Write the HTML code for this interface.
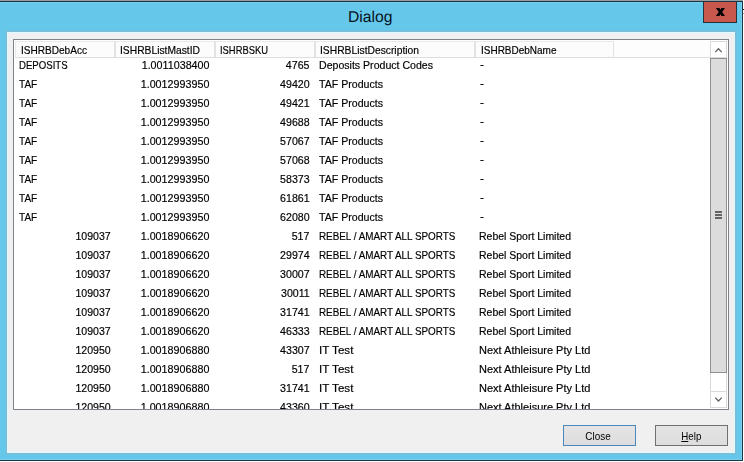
<!DOCTYPE html>
<html><head><meta charset="utf-8"><title>Dialog</title>
<style>
html,body{margin:0;padding:0;}
body{width:744px;height:462px;background:#fff;overflow:hidden;position:relative;font-family:"Liberation Sans",sans-serif;font-size:11px;color:#000;}
.abs{position:absolute;}
#win{position:absolute;left:0;top:0;width:743px;height:461px;background:#65c8eb;}
#topg{position:absolute;left:0;top:0;width:743px;height:1px;background:#9a9ba0;}
#topd{position:absolute;left:0;top:1px;width:743px;height:1px;background:#1d3644;}
#topl{position:absolute;left:0;top:2px;width:741px;height:456px;border-top:1px solid #76cdec;border-right:1px solid #7ccfec;border-bottom:1px solid #7ccfec;}
#rd{position:absolute;left:742px;top:1px;width:1px;height:460px;background:#1d3644;}
#bd{position:absolute;left:0;top:460px;width:743px;height:1px;background:#1d3644;}

#title{position:absolute;left:348px;top:8.6px;font-size:15.7px;line-height:17px;color:#06121c;white-space:nowrap;text-rendering:geometricPrecision;}
#cls{position:absolute;left:703px;top:2px;width:32px;height:20px;background:#c8574d;border:1px solid #26323b;border-top:none;}
#client{position:absolute;left:7px;top:32px;width:728px;height:421px;background:#f0f0f0;box-shadow:inset 0 0 0 1px #e0f9ff, inset 0 0 0 2px #ecf1f3, 0 0 0 1px #7fbbd5, 0 0 0 2px #6bc4e3;}
#lv{will-change:transform;position:absolute;left:13px;top:39px;width:714px;height:369px;border:1px solid #80838a;background:#fff;overflow:hidden;}
#hdr{position:absolute;left:0;top:1px;width:696px;height:17px;background:#fff;}
.hc{position:absolute;top:0;height:15px;background:#fcfcfc;border-top:1px solid #e9e9e9;border-right:2px solid #e2e2e2;border-bottom:1px solid #dedede;box-sizing:content-box;}
.t{position:absolute;white-space:nowrap;line-height:13px;display:inline-block;-webkit-text-stroke:0.18px #000;}
#sb{position:absolute;left:696px;top:1px;width:17px;height:367px;background:#fff;box-shadow:inset 1px 0 0 #dadada, inset -1px 0 0 #dadada;}
.sbtn{position:absolute;left:0;width:15px;height:15px;border:1px solid #dadada;background:#fff;}
#thumb{position:absolute;left:0;top:17px;width:15px;height:313px;background:#dcdcdc;border:1px solid #8f8f8f;}
.grip{position:absolute;left:4px;width:7px;height:2px;background:#646464;}
.btn{will-change:transform;position:absolute;top:425px;width:71px;height:19px;border:1px solid #707070;background:linear-gradient(#e4e4e4,#dddddd);text-align:center;line-height:19px;}
</style></head><body>
<div id="win"></div><div id="topg"></div><div id="topd"></div><div id="topl"></div><div id="rd"></div><div id="bd"></div>
<div class="abs" style="left:743px;top:9px;width:1px;height:1px;background:#222"></div><div class="abs" style="left:743px;top:13px;width:1px;height:1px;background:#aaa"></div>
<div id="title">Dialog</div>
<div id="cls"><svg width="32" height="20" viewBox="0 0 32 20" style="position:absolute;left:0;top:0"><path d="M11.9 5.9 H15.3 L21 13.9 H17.6 Z M17.6 5.9 H21 L15.3 13.9 H11.9 Z" fill="#000"/></svg></div>
<div id="client"></div>
<div id="lv">
 <div id="hdr">
<div class="hc" style="left:1px;width:99px;box-shadow:inset 1px 0 0 #ebebeb"></div>
<span class="t" style="left:6.5px;top:3px;transform:scaleX(0.9149);transform-origin:0 0">ISHRBDebAcc</span>
<div class="hc" style="left:102px;width:98px"></div>
<span class="t" style="left:106.0px;top:3px;transform:scaleX(0.9348);transform-origin:0 0">ISHRBListMastID</span>
<div class="hc" style="left:202px;width:98px"></div>
<span class="t" style="left:206.0px;top:3px;transform:scaleX(0.8533);transform-origin:0 0">ISHRBSKU</span>
<div class="hc" style="left:302px;width:158px"></div>
<span class="t" style="left:306.0px;top:3px;transform:scaleX(0.9360);transform-origin:0 0">ISHRBListDescription</span>
<div class="hc" style="left:462px;width:137px;border-right-width:1px"></div>
<span class="t" style="left:466.7px;top:3px;transform:scaleX(0.9081);transform-origin:0 0">ISHRBDebName</span>
<div class="hc" style="left:600px;width:96px;border-right:none;border-top-color:#fdfdfd;background:#fdfdfd"></div>
 </div>
<span class="t" style="left:5.199999999999999px;top:19px;transform:scaleX(0.8738);transform-origin:0 0">DEPOSITS</span>
<span class="t" style="right:518.7px;top:19px;transform:scaleX(0.9760);transform-origin:100% 0">1.0011038400</span>
<span class="t" style="right:418.2px;top:19px;transform:scaleX(0.9650);transform-origin:100% 0">4765</span>
<span class="t" style="left:305.2px;top:19px;transform:scaleX(0.9611);transform-origin:0 0">Deposits Product Codes</span>
<span class="t" style="left:466.2px;top:18px;transform:scaleX(1.0800);transform-origin:0 0">-</span>
<span class="t" style="left:5.199999999999999px;top:38px;transform:scaleX(0.9120);transform-origin:0 0">TAF</span>
<span class="t" style="right:518.7px;top:38px;transform:scaleX(0.9760);transform-origin:100% 0">1.0012993950</span>
<span class="t" style="right:418.2px;top:38px;transform:scaleX(0.9650);transform-origin:100% 0">49420</span>
<span class="t" style="left:305.2px;top:38px;transform:scaleX(0.9633);transform-origin:0 0">TAF Products</span>
<span class="t" style="left:466.2px;top:37px;transform:scaleX(1.0800);transform-origin:0 0">-</span>
<span class="t" style="left:5.199999999999999px;top:57px;transform:scaleX(0.9120);transform-origin:0 0">TAF</span>
<span class="t" style="right:518.7px;top:57px;transform:scaleX(0.9760);transform-origin:100% 0">1.0012993950</span>
<span class="t" style="right:418.2px;top:57px;transform:scaleX(0.9650);transform-origin:100% 0">49421</span>
<span class="t" style="left:305.2px;top:57px;transform:scaleX(0.9633);transform-origin:0 0">TAF Products</span>
<span class="t" style="left:466.2px;top:56px;transform:scaleX(1.0800);transform-origin:0 0">-</span>
<span class="t" style="left:5.199999999999999px;top:76px;transform:scaleX(0.9120);transform-origin:0 0">TAF</span>
<span class="t" style="right:518.7px;top:76px;transform:scaleX(0.9760);transform-origin:100% 0">1.0012993950</span>
<span class="t" style="right:418.2px;top:76px;transform:scaleX(0.9650);transform-origin:100% 0">49688</span>
<span class="t" style="left:305.2px;top:76px;transform:scaleX(0.9633);transform-origin:0 0">TAF Products</span>
<span class="t" style="left:466.2px;top:75px;transform:scaleX(1.0800);transform-origin:0 0">-</span>
<span class="t" style="left:5.199999999999999px;top:95px;transform:scaleX(0.9120);transform-origin:0 0">TAF</span>
<span class="t" style="right:518.7px;top:95px;transform:scaleX(0.9760);transform-origin:100% 0">1.0012993950</span>
<span class="t" style="right:418.2px;top:95px;transform:scaleX(0.9650);transform-origin:100% 0">57067</span>
<span class="t" style="left:305.2px;top:95px;transform:scaleX(0.9633);transform-origin:0 0">TAF Products</span>
<span class="t" style="left:466.2px;top:94px;transform:scaleX(1.0800);transform-origin:0 0">-</span>
<span class="t" style="left:5.199999999999999px;top:114px;transform:scaleX(0.9120);transform-origin:0 0">TAF</span>
<span class="t" style="right:518.7px;top:114px;transform:scaleX(0.9760);transform-origin:100% 0">1.0012993950</span>
<span class="t" style="right:418.2px;top:114px;transform:scaleX(0.9650);transform-origin:100% 0">57068</span>
<span class="t" style="left:305.2px;top:114px;transform:scaleX(0.9633);transform-origin:0 0">TAF Products</span>
<span class="t" style="left:466.2px;top:113px;transform:scaleX(1.0800);transform-origin:0 0">-</span>
<span class="t" style="left:5.199999999999999px;top:133px;transform:scaleX(0.9120);transform-origin:0 0">TAF</span>
<span class="t" style="right:518.7px;top:133px;transform:scaleX(0.9760);transform-origin:100% 0">1.0012993950</span>
<span class="t" style="right:418.2px;top:133px;transform:scaleX(0.9650);transform-origin:100% 0">58373</span>
<span class="t" style="left:305.2px;top:133px;transform:scaleX(0.9633);transform-origin:0 0">TAF Products</span>
<span class="t" style="left:466.2px;top:132px;transform:scaleX(1.0800);transform-origin:0 0">-</span>
<span class="t" style="left:5.199999999999999px;top:152px;transform:scaleX(0.9120);transform-origin:0 0">TAF</span>
<span class="t" style="right:518.7px;top:152px;transform:scaleX(0.9760);transform-origin:100% 0">1.0012993950</span>
<span class="t" style="right:418.2px;top:152px;transform:scaleX(0.9650);transform-origin:100% 0">61861</span>
<span class="t" style="left:305.2px;top:152px;transform:scaleX(0.9633);transform-origin:0 0">TAF Products</span>
<span class="t" style="left:466.2px;top:151px;transform:scaleX(1.0800);transform-origin:0 0">-</span>
<span class="t" style="left:5.199999999999999px;top:171px;transform:scaleX(0.9120);transform-origin:0 0">TAF</span>
<span class="t" style="right:518.7px;top:171px;transform:scaleX(0.9760);transform-origin:100% 0">1.0012993950</span>
<span class="t" style="right:418.2px;top:171px;transform:scaleX(0.9650);transform-origin:100% 0">62080</span>
<span class="t" style="left:305.2px;top:171px;transform:scaleX(0.9633);transform-origin:0 0">TAF Products</span>
<span class="t" style="left:466.2px;top:170px;transform:scaleX(1.0800);transform-origin:0 0">-</span>
<span class="t" style="right:617.7px;top:190px;transform:scaleX(0.9600);transform-origin:100% 0">109037</span>
<span class="t" style="right:518.7px;top:190px;transform:scaleX(0.9760);transform-origin:100% 0">1.0018906620</span>
<span class="t" style="right:418.2px;top:190px;transform:scaleX(0.9650);transform-origin:100% 0">517</span>
<span class="t" style="left:305.2px;top:190px;transform:scaleX(0.8965);transform-origin:0 0">REBEL / AMART ALL SPORTS</span>
<span class="t" style="left:465.0px;top:190px;transform:scaleX(0.9523);transform-origin:0 0">Rebel Sport Limited</span>
<span class="t" style="right:617.7px;top:209px;transform:scaleX(0.9600);transform-origin:100% 0">109037</span>
<span class="t" style="right:518.7px;top:209px;transform:scaleX(0.9760);transform-origin:100% 0">1.0018906620</span>
<span class="t" style="right:418.2px;top:209px;transform:scaleX(0.9650);transform-origin:100% 0">29974</span>
<span class="t" style="left:305.2px;top:209px;transform:scaleX(0.8965);transform-origin:0 0">REBEL / AMART ALL SPORTS</span>
<span class="t" style="left:465.0px;top:209px;transform:scaleX(0.9523);transform-origin:0 0">Rebel Sport Limited</span>
<span class="t" style="right:617.7px;top:228px;transform:scaleX(0.9600);transform-origin:100% 0">109037</span>
<span class="t" style="right:518.7px;top:228px;transform:scaleX(0.9760);transform-origin:100% 0">1.0018906620</span>
<span class="t" style="right:418.2px;top:228px;transform:scaleX(0.9650);transform-origin:100% 0">30007</span>
<span class="t" style="left:305.2px;top:228px;transform:scaleX(0.8965);transform-origin:0 0">REBEL / AMART ALL SPORTS</span>
<span class="t" style="left:465.0px;top:228px;transform:scaleX(0.9523);transform-origin:0 0">Rebel Sport Limited</span>
<span class="t" style="right:617.7px;top:247px;transform:scaleX(0.9600);transform-origin:100% 0">109037</span>
<span class="t" style="right:518.7px;top:247px;transform:scaleX(0.9760);transform-origin:100% 0">1.0018906620</span>
<span class="t" style="right:418.2px;top:247px;transform:scaleX(0.9650);transform-origin:100% 0">30011</span>
<span class="t" style="left:305.2px;top:247px;transform:scaleX(0.8965);transform-origin:0 0">REBEL / AMART ALL SPORTS</span>
<span class="t" style="left:465.0px;top:247px;transform:scaleX(0.9523);transform-origin:0 0">Rebel Sport Limited</span>
<span class="t" style="right:617.7px;top:266px;transform:scaleX(0.9600);transform-origin:100% 0">109037</span>
<span class="t" style="right:518.7px;top:266px;transform:scaleX(0.9760);transform-origin:100% 0">1.0018906620</span>
<span class="t" style="right:418.2px;top:266px;transform:scaleX(0.9650);transform-origin:100% 0">31741</span>
<span class="t" style="left:305.2px;top:266px;transform:scaleX(0.8965);transform-origin:0 0">REBEL / AMART ALL SPORTS</span>
<span class="t" style="left:465.0px;top:266px;transform:scaleX(0.9523);transform-origin:0 0">Rebel Sport Limited</span>
<span class="t" style="right:617.7px;top:285px;transform:scaleX(0.9600);transform-origin:100% 0">109037</span>
<span class="t" style="right:518.7px;top:285px;transform:scaleX(0.9760);transform-origin:100% 0">1.0018906620</span>
<span class="t" style="right:418.2px;top:285px;transform:scaleX(0.9650);transform-origin:100% 0">46333</span>
<span class="t" style="left:305.2px;top:285px;transform:scaleX(0.8965);transform-origin:0 0">REBEL / AMART ALL SPORTS</span>
<span class="t" style="left:465.0px;top:285px;transform:scaleX(0.9523);transform-origin:0 0">Rebel Sport Limited</span>
<span class="t" style="right:617.7px;top:304px;transform:scaleX(0.9600);transform-origin:100% 0">120950</span>
<span class="t" style="right:518.7px;top:304px;transform:scaleX(0.9760);transform-origin:100% 0">1.0018906880</span>
<span class="t" style="right:418.2px;top:304px;transform:scaleX(0.9650);transform-origin:100% 0">43307</span>
<span class="t" style="left:305.2px;top:304px;transform:scaleX(1.0549);transform-origin:0 0">IT Test</span>
<span class="t" style="left:465.0px;top:304px;transform:scaleX(1.0011);transform-origin:0 0">Next Athleisure Pty Ltd</span>
<span class="t" style="right:617.7px;top:323px;transform:scaleX(0.9600);transform-origin:100% 0">120950</span>
<span class="t" style="right:518.7px;top:323px;transform:scaleX(0.9760);transform-origin:100% 0">1.0018906880</span>
<span class="t" style="right:418.2px;top:323px;transform:scaleX(0.9650);transform-origin:100% 0">517</span>
<span class="t" style="left:305.2px;top:323px;transform:scaleX(1.0549);transform-origin:0 0">IT Test</span>
<span class="t" style="left:465.0px;top:323px;transform:scaleX(1.0011);transform-origin:0 0">Next Athleisure Pty Ltd</span>
<span class="t" style="right:617.7px;top:342px;transform:scaleX(0.9600);transform-origin:100% 0">120950</span>
<span class="t" style="right:518.7px;top:342px;transform:scaleX(0.9760);transform-origin:100% 0">1.0018906880</span>
<span class="t" style="right:418.2px;top:342px;transform:scaleX(0.9650);transform-origin:100% 0">31741</span>
<span class="t" style="left:305.2px;top:342px;transform:scaleX(1.0549);transform-origin:0 0">IT Test</span>
<span class="t" style="left:465.0px;top:342px;transform:scaleX(1.0011);transform-origin:0 0">Next Athleisure Pty Ltd</span>
<span class="t" style="right:617.7px;top:361px;transform:scaleX(0.9600);transform-origin:100% 0">120950</span>
<span class="t" style="right:518.7px;top:361px;transform:scaleX(0.9760);transform-origin:100% 0">1.0018906880</span>
<span class="t" style="right:418.2px;top:361px;transform:scaleX(0.9650);transform-origin:100% 0">43360</span>
<span class="t" style="left:305.2px;top:361px;transform:scaleX(1.0549);transform-origin:0 0">IT Test</span>
<span class="t" style="left:465.0px;top:361px;transform:scaleX(1.0011);transform-origin:0 0">Next Athleisure Pty Ltd</span>
 <div id="sb">
  <div class="sbtn" style="top:0"><svg width="15" height="15" style="position:absolute;left:0;top:0"><path d="M4.2 10.1 L7.45 6.7 L10.7 10.1" stroke="#606060" stroke-width="1.3" fill="none"/></svg></div>
  <div id="thumb"><div class="grip" style="top:152px"></div><div class="grip" style="top:155px"></div><div class="grip" style="top:158px"></div></div>
  <div class="sbtn" style="top:350px"><svg width="15" height="15" style="position:absolute;left:0;top:0"><path d="M4.2 5.6 L7.45 9.0 L10.7 5.6" stroke="#606060" stroke-width="1.3" fill="none"/></svg></div>
 </div>
</div>
<div class="btn" style="left:563px;border-color:#4a88bc;"><span style="display:inline-block;position:relative;top:1px;left:-1.5px;transform:scaleX(0.903)">Close</span></div>
<div class="btn" style="left:655px;"><span style="display:inline-block;position:relative;top:1px;left:-0.5px;transform:scaleX(0.885)"><u>H</u>elp</span></div>
</body></html>
